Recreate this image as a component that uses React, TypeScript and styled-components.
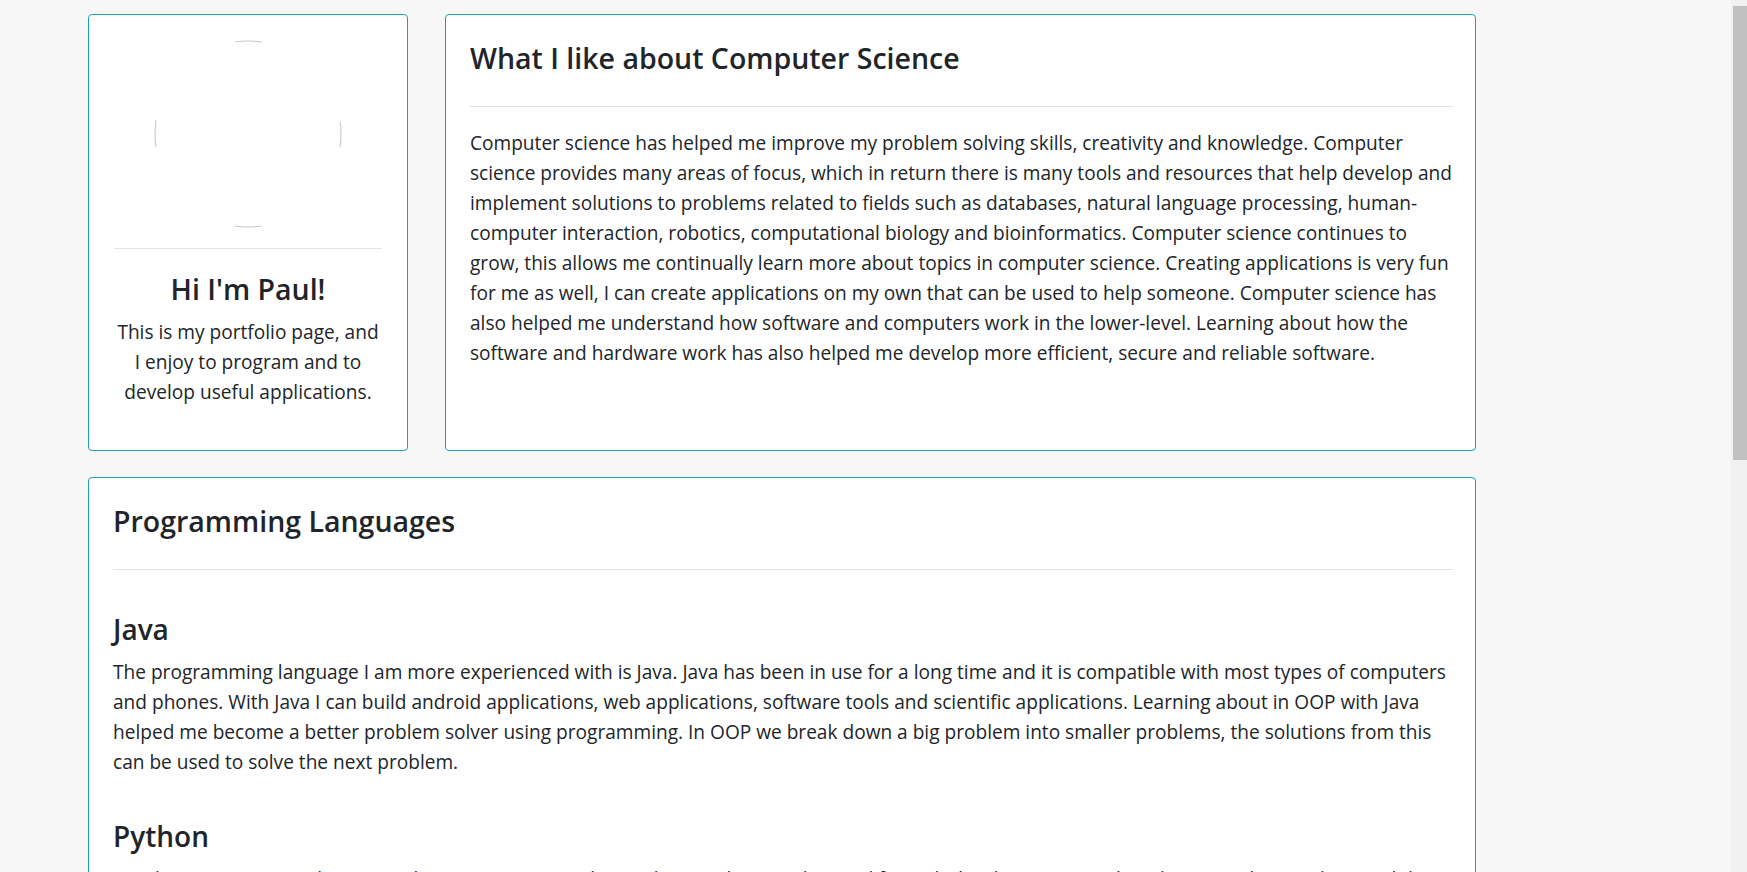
import React from 'react';
import styled, { createGlobalStyle } from 'styled-components';

const GlobalStyle = createGlobalStyle`
  body {
    margin: 0;
    background: #f7f7f7;
    color: #212529;
    font-family: "Open Sans", "Noto Sans", sans-serif;
    font-size: 19.1px;
    line-height: 30px;
  }
`;

const languages = [
  {
    name: 'Java',
    text: 'The programming language I am more experienced with is Java. Java has been in use for a long time and it is compatible with most types of computers and phones. With Java I can build android applications, web applications, software tools and scientific applications. Learning about in OOP with Java helped me become a better problem solver using programming. In OOP we break down a big problem into smaller problems, the solutions from this can be used to solve the next problem.',
  },
  {
    name: 'Python',
    text: 'Another programming language I have experience with is Python. Python can be used for web development, machine learning, data analysis and data visualization. Python is easy to read and write, which makes it a great language to quickly test an idea or to automate repetitive tasks. Python also has a large number of libraries that help me solve problems faster.',
  },
  {
    name: 'JavaScript',
    text: 'JavaScript is the language I use to build web pages and web applications. With JavaScript I can make pages interactive and connect them to a server. Frameworks such as React help me organize the code of a user interface into small components that can be reused.',
  },
  {
    name: 'SQL',
    text: 'SQL is the language I use to work with relational databases. With SQL I can create tables, store data and write queries to find the information that an application needs.',
  },
];

export default function App() {
  return (
    <>
      <GlobalStyle />
      <Page>
        <ProfileCard>
          <Avatar>
            <svg width="188" height="188" viewBox="0 0 188 188">
              <circle
                cx="94"
                cy="94"
                r="93"
                fill="none"
                stroke="#c4c4c4"
                strokeWidth="1"
                strokeDasharray="27 119.08"
                strokeDashoffset="13.5"
              />
            </svg>
          </Avatar>
          <Divider $top={20} $bottom={22} />
          <Name>Hi I'm Paul!</Name>
          <Intro>
            This is my portfolio page, and I enjoy to program and to develop
            useful applications.
          </Intro>
        </ProfileCard>

        <Card>
          <CardTitle>What I like about Computer Science</CardTitle>
          <Divider $top={0} $bottom={21} />
          <Text>
            Computer science has helped me improve my problem solving skills,
            creativity and knowledge. Computer science provides many areas of
            focus, which in return there is many tools and resources that help
            develop and implement solutions to problems related to fields such
            as databases, natural language processing, human-computer
            interaction, robotics, computational biology and bioinformatics.
            Computer science continues to grow, this allows me continually learn
            more about topics in computer science. Creating applications is very
            fun for me as well, I can create applications on my own that can be
            used to help someone. Computer science has also helped me understand
            how software and computers work in the lower-level. Learning about
            how the software and hardware work has also helped me develop more
            efficient, secure and reliable software.
          </Text>
        </Card>

        <WideCard>
          <CardTitle>Programming Languages</CardTitle>
          <Divider $top={0} $bottom={0} />
          {languages.map((lang) => (
            <Section key={lang.name}>
              <SectionTitle>{lang.name}</SectionTitle>
              <Text>{lang.text}</Text>
            </Section>
          ))}
        </WideCard>
      </Page>
      <ScrollTrack>
        <ScrollThumb />
      </ScrollTrack>
    </>
  );
}

const Page = styled.main`
  display: grid;
  grid-template-columns: 320px 1031px;
  column-gap: 37px;
  row-gap: 26px;
  padding: 14px 0 40px 88px;
  width: 1388px;
`;

const Card = styled.section`
  background: #fff;
  border: 1px solid #17a2b8;
  border-radius: 4px;
  padding: 25px 22px 25px 24px;
  box-sizing: border-box;
`;

const ProfileCard = styled(Card)`
  padding: 25px;
  text-align: center;
`;

const WideCard = styled(Card)`
  grid-column: 1 / -1;
  padding-bottom: 30px;
`;

const Avatar = styled.div`
  display: flex;
  justify-content: center;
  height: 188px;
`;

const Divider = styled.hr<{ $top: number; $bottom: number }>`
  border: 0;
  border-top: 1px solid #e3e3e3;
  margin: ${(p) => p.$top}px 0 ${(p) => p.$bottom}px;
`;

const CardTitle = styled.h2`
  font-size: 28.5px;
  font-weight: 600;
  line-height: 37px;
  margin: 0 0 29px;
`;

const Name = styled.h3`
  font-size: 28.5px;
  font-weight: 600;
  line-height: 37px;
  margin: 0 0 9px;
`;

const Intro = styled.p`
  margin: 0 0 18px;
`;

const Text = styled.p`
  margin: 0;
`;

const Section = styled.div`
  margin-top: 41px;
`;

const SectionTitle = styled.h3`
  font-size: 28px;
  font-weight: 600;
  line-height: 37px;
  margin: 0 0 9px;
`;

/* browser scrollbar seen in the screenshot, drawn over the right edge */
const ScrollTrack = styled.div`
  position: fixed;
  top: 0;
  right: 0;
  width: 16px;
  height: 100vh;
  background: #f1f1f1;
`;

const ScrollThumb = styled.div`
  margin: 6px 0 0 2px;
  width: 14px;
  height: 454px;
  background: #c1c1c1;
`;
